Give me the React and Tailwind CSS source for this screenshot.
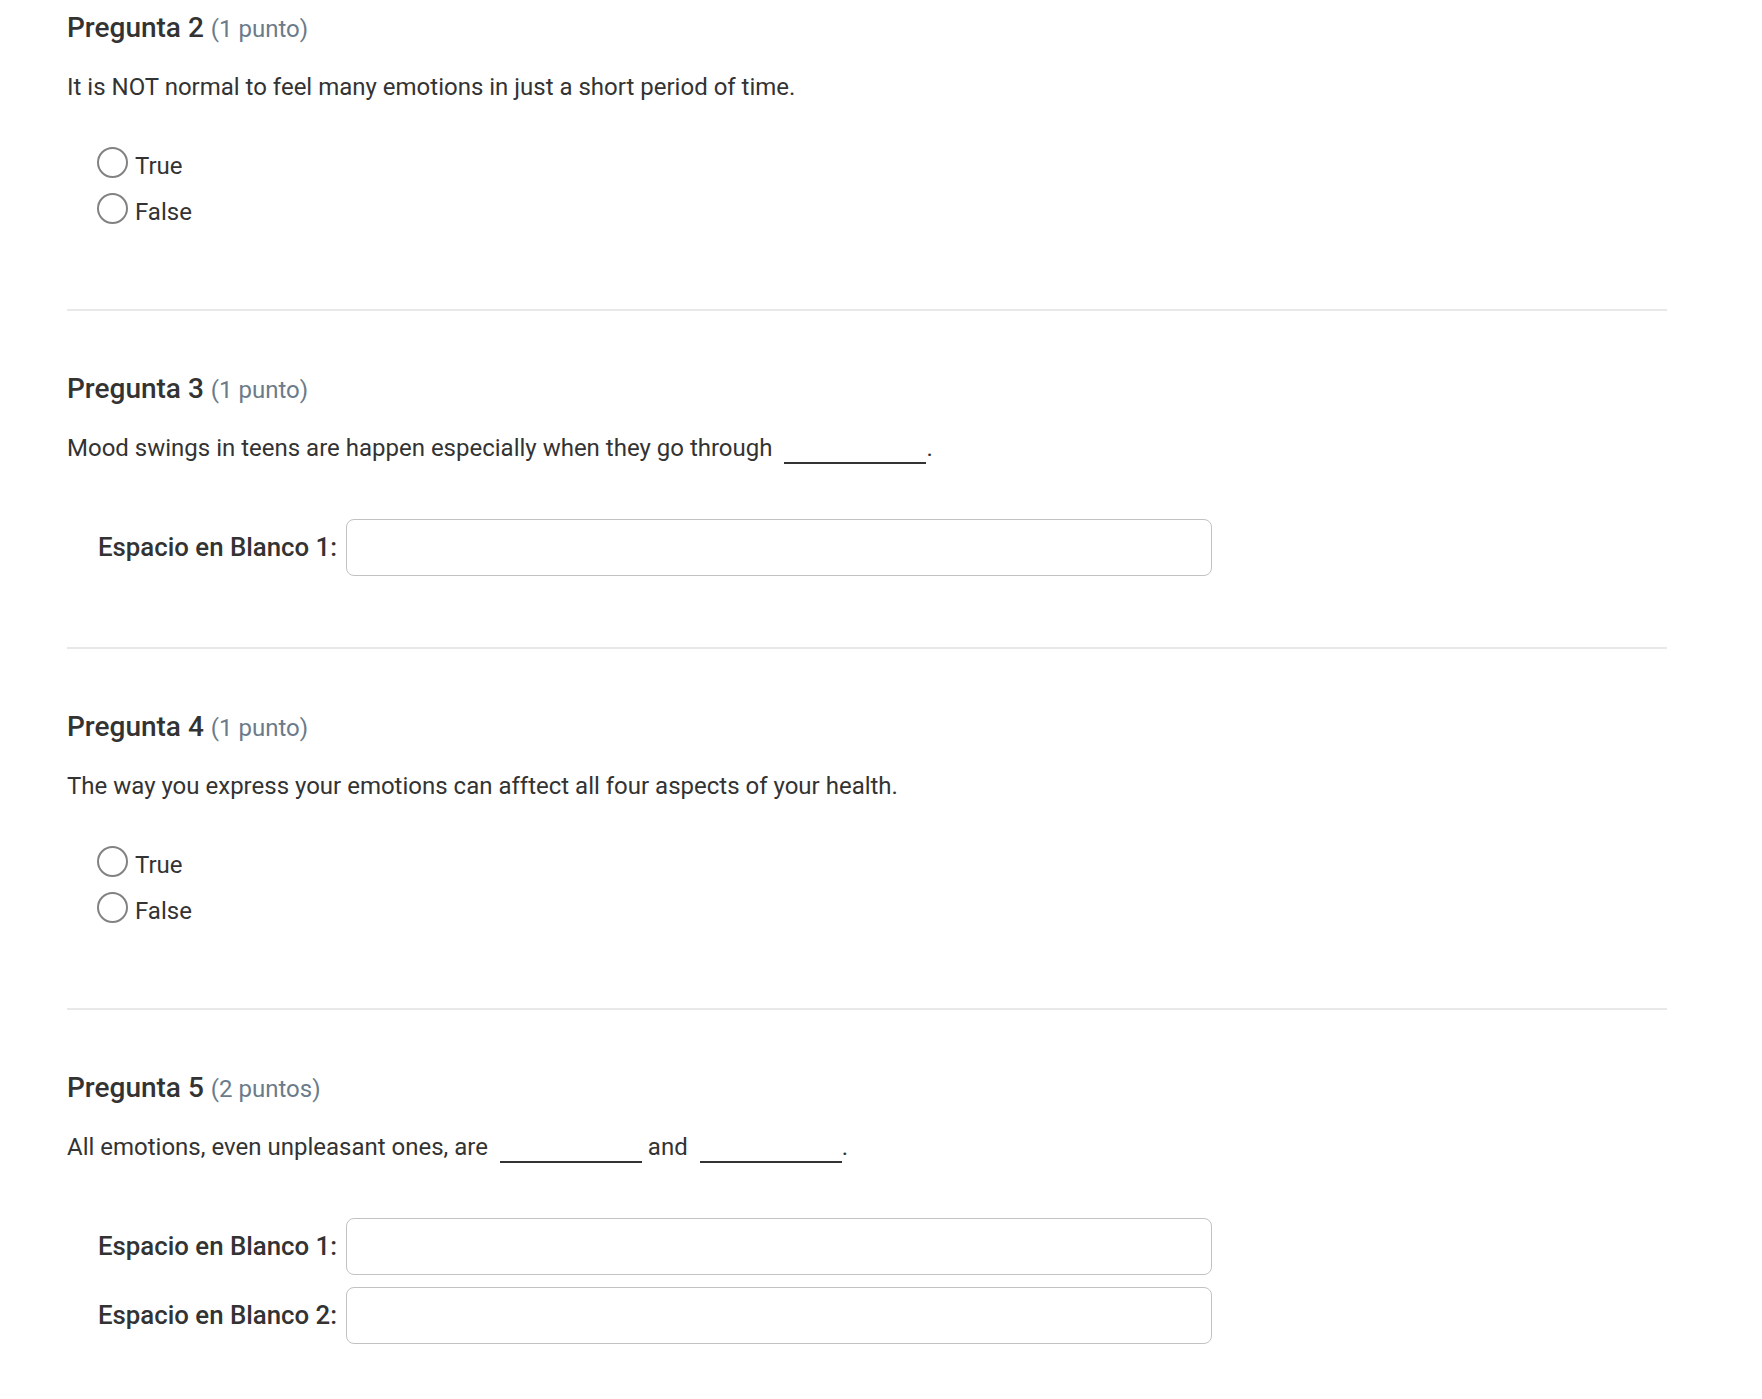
const questions = [
  {
    n: 2,
    points: '1 punto',
    kind: 'tf',
    text: ['It is NOT normal to feel many emotions in just a short period of time.'],
  },
  {
    n: 3,
    points: '1 punto',
    kind: 'blanks',
    text: ['Mood swings in teens are happen especially when they go through ', null, '.'],
    blanks: 1,
  },
  {
    n: 4,
    points: '1 punto',
    kind: 'tf',
    text: ['The way you express your emotions can afftect all four aspects of your health.'],
  },
  {
    n: 5,
    points: '2 puntos',
    kind: 'blanks',
    text: ['All emotions, even unpleasant ones, are ', null, ' and ', null, '.'],
    blanks: 2,
  },
]

// the blank "____" drawn in the question text
function Blank() {
  return <span className="inline-block w-[142px] h-[2px] bg-[#333] ml-[6px] align-[-8px]" />
}

function Radio({ label }) {
  return (
    <label className="flex items-center h-[46px] pl-[30px]">
      <span className="w-[31px] h-[31px] mb-[4px] rounded-full border-[2.5px] border-[#828282] bg-white shrink-0" />
      <span className="ml-[7px] mt-[3px] text-[24px] leading-[46px]">{label}</span>
    </label>
  )
}

function BlankInput({ i, first }) {
  return (
    <div className={`flex items-center pl-[31px] ${first ? 'mt-[51px]' : 'mt-[12px]'}`}>
      <span className="text-[25.8px] font-medium leading-[57px]">Espacio en Blanco {i}:</span>
      <input
        type="text"
        className="ml-[9px] w-[866px] h-[57px] rounded-[8px] border-[1.5px] border-[#c2c2c2] bg-white outline-none"
      />
    </div>
  )
}

function Question({ q }) {
  return (
    <div>
      <h2 className="h-[40px] leading-[40px] text-[28px] font-medium">
        Pregunta {q.n} <span className="text-[24px] font-normal text-[#6b7b8a]">({q.points})</span>
      </h2>
      <p className="mt-[19px] h-[40px] leading-[40px] text-[24px]">
        {q.text.map((t, i) => (t === null ? <Blank key={i} /> : <span key={i}>{t}</span>))}
      </p>
      {q.kind === 'tf' ? (
        <div className="mt-[34px]">
          <Radio label="True" />
          <Radio label="False" />
        </div>
      ) : (
        <div>
          {Array.from({ length: q.blanks }).map((_, i) => (
            <BlankInput key={i} i={i + 1} first={i === 0} />
          ))}
        </div>
      )}
    </div>
  )
}

export default function App() {
  return (
    <div className="min-h-screen bg-white font-['Roboto',sans-serif] text-[#333]">
      <div className="pl-[67px] pt-[8px] w-[1667px]">
        {questions.map((q, idx) => (
          <div key={q.n}>
            <Question q={q} />
            {idx < questions.length - 1 && (
              <div className={`h-[2px] bg-[#e8e8e8] mb-[58px] ${q.kind === 'tf' ? 'mt-[76px]' : 'mt-[71px]'}`} />
            )}
          </div>
        ))}
      </div>
    </div>
  )
}
